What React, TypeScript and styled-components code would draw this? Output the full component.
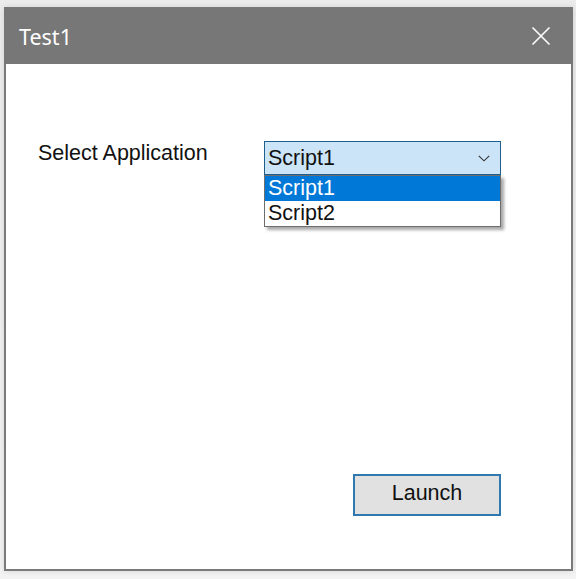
import React, { useState } from 'react';
import styled, { createGlobalStyle } from 'styled-components';

const GlobalStyle = createGlobalStyle`
  html, body { margin: 0; padding: 0; background: #efefef; }
  body { font-family: "Liberation Sans", Arial, sans-serif; }
`;

// ── Window frame ────────────────────────────────────────────
const Desktop = styled.div`
  width: 576px;
  height: 579px;
  padding: 7px 0 0 4px;
  box-sizing: border-box;
  background: linear-gradient(#ececec, #f3f3f3);
`;

const Window = styled.div`
  width: 569px;
  height: 564px;
  box-sizing: border-box;
  display: flex;
  flex-direction: column;
  background: #ffffff;
  border: 2px solid #7a7a7a;
  border-top: none;
  box-shadow: 0 0 6px rgba(0, 0, 0, 0.12);
`;

const TitleBar = styled.div`
  height: 57px;
  flex: none;
  display: flex;
  align-items: center;
  justify-content: space-between;
  background: #777777;
  padding: 0 20px 0 15px;
  margin: 0 -2px;
`;

const Title = styled.span`
  font-family: "Noto Sans", "Open Sans", sans-serif;
  font-size: 21.5px;
  color: #ffffff;
  margin-top: 1px;
`;

const CloseButton = styled.button`
  width: 24px;
  height: 24px;
  padding: 0;
  border: none;
  background: transparent;
  display: flex;
  align-items: center;
  justify-content: center;
  cursor: pointer;
`;

// ── Content ─────────────────────────────────────────────────
const Content = styled.div`
  flex: 1;
  display: flex;
  flex-direction: column;
  padding: 77px 70px 53px 32px;
`;

const FieldRow = styled.div`
  display: flex;
  align-items: flex-start;
`;

const Label = styled.label`
  width: 226px;
  flex: none;
  font-size: 21.5px;
  line-height: 24px;
  color: #111111;
`;

const ComboWrap = styled.div`
  position: relative;
  width: 237px;
`;

const ComboBox = styled.div`
  height: 34px;
  box-sizing: border-box;
  display: flex;
  align-items: center;
  justify-content: space-between;
  padding: 0 10px 0 3px;
  background: #cce4f7;
  border: 1px solid #1e5f8e;
  font-size: 21.5px;
  color: #111111;
`;

const DropList = styled.ul`
  position: absolute;
  top: 34px;
  left: 0;
  right: 0;
  margin: 0;
  padding: 0;
  list-style: none;
  background: #ffffff;
  border: 1px solid #6e6e6e;
  box-shadow: 3px 3px 3px rgba(0, 0, 0, 0.35);
`;

const Option = styled.li<{ $selected: boolean }>`
  height: 25px;
  display: flex;
  align-items: center;
  padding-left: 3px;
  font-size: 21.5px;
  color: ${p => (p.$selected ? '#ffffff' : '#111111')};
  background: ${p => (p.$selected ? '#0078d7' : 'transparent')};
`;

const Spacer = styled.div`
  flex: 1;
`;

const LaunchButton = styled.button`
  align-self: flex-end;
  width: 148px;
  height: 42px;
  box-sizing: border-box;
  background: #e1e1e1;
  border: 2px solid #2f78b0;
  font-family: "Liberation Sans", Arial, sans-serif;
  font-size: 21.5px;
  color: #111111;
  padding: 0 0 3px;
`;

const options = ['Script1', 'Script2'];

export default function App() {
  const [selected] = useState('Script1');

  return (
    <>
      <GlobalStyle />
      <Desktop>
        <Window>
          <TitleBar>
            <Title>Test1</Title>
            <CloseButton aria-label="Close">
              <svg width="20" height="20" viewBox="0 0 20 20">
                <path d="M1.5 1.5L18.5 18.5M18.5 1.5L1.5 18.5" stroke="#ffffff" strokeWidth="1.6" />
              </svg>
            </CloseButton>
          </TitleBar>
          <Content>
            <FieldRow>
              <Label>Select Application</Label>
              <ComboWrap>
                <ComboBox>
                  <span>{selected}</span>
                  <svg width="12" height="7" viewBox="0 0 12 7">
                    <path d="M0.8 0.8L6 5.8L11.2 0.8" fill="none" stroke="#333333" strokeWidth="1.1" />
                  </svg>
                </ComboBox>
                <DropList>
                  {options.map(o => (
                    <Option key={o} $selected={o === selected}>{o}</Option>
                  ))}
                </DropList>
              </ComboWrap>
            </FieldRow>
            <Spacer />
            <LaunchButton>Launch</LaunchButton>
          </Content>
        </Window>
      </Desktop>
    </>
  );
}
